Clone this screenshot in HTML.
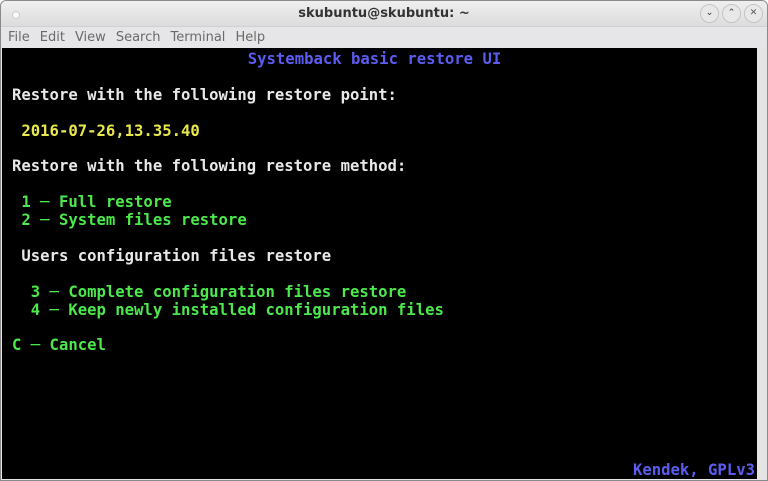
<!DOCTYPE html>
<html><head><style>
body{margin:0;width:768px;height:481px;overflow:hidden;background:#fff;font-family:"DejaVu Sans","Liberation Sans",sans-serif}
.win{position:absolute;left:0;top:0;width:766px;height:479px;border:1px solid #8a8a8a;border-radius:6px 6px 0 0;background:#e6e6e8;overflow:hidden}
.title{height:25px;background:linear-gradient(#efefef,#dcdcdc);text-align:center;font-size:13px;font-weight:bold;line-height:25px;color:#333;position:relative}
.dot{position:absolute;left:11px;top:10px;width:6px;height:6px;border-radius:50%;background:#fafafa;border:1px solid #ccc}
.btn{position:absolute;top:3px;width:17px;height:17px;border-radius:50%;border:1px solid #c4c4c4;background:#e8e8e8;font-size:9px;line-height:17px;text-align:center;color:#555}
.menu{height:22px;font-size:13px;color:#6a6a6a;line-height:22px;padding-left:7px;border-top:1px solid #d0d0d0}
.menu span{margin-right:10px}
.term{position:absolute;left:2px;top:48px;width:755px;height:431px;background:#000;font-family:"DejaVu Sans Mono",monospace;font-weight:bold;font-size:15.6px;white-space:pre;color:#e8e8e8}
.l{position:absolute;left:10px;height:18px;line-height:18px}
.sb{position:absolute;left:757px;top:48px;width:9px;height:431px;background:#e4e4e4}
.y{color:#e8e84c}.g{color:#4ce84c}.b{color:#5c5cf0}
</style></head><body>
<div class="win">
<div class="title"><div class="dot"></div>skubuntu@skubuntu: ~
<div class="btn" style="left:699px">&#8964;</div><div class="btn" style="left:721px">&#8963;</div><div class="btn" style="left:743px">✕</div></div>
<div class="menu"><span>File</span><span>Edit</span><span>View</span><span>Search</span><span>Terminal</span><span>Help</span></div>
</div>
<div class="sb"></div>
<div class="term">
<div class="l b" style="top:2px;left:0;width:745px;text-align:center">Systemback basic restore UI</div>
<div class="l" style="top:38px">Restore with the following restore point:</div>
<div class="l y" style="top:74px"> 2016-07-26,13.35.40</div>
<div class="l" style="top:109px">Restore with the following restore method:</div>
<div class="l g" style="top:145px"> 1 ─ Full restore</div>
<div class="l g" style="top:163px"> 2 ─ System files restore</div>
<div class="l" style="top:199px"> Users configuration files restore</div>
<div class="l g" style="top:235px">  3 ─ Complete configuration files restore</div>
<div class="l g" style="top:253px">  4 ─ Keep newly installed configuration files</div>
<div class="l g" style="top:288px">C ─ Cancel</div>
<div class="l b" style="top:413px;left:auto;right:2px">Kendek, GPLv3</div>
</div>
</body></html>
